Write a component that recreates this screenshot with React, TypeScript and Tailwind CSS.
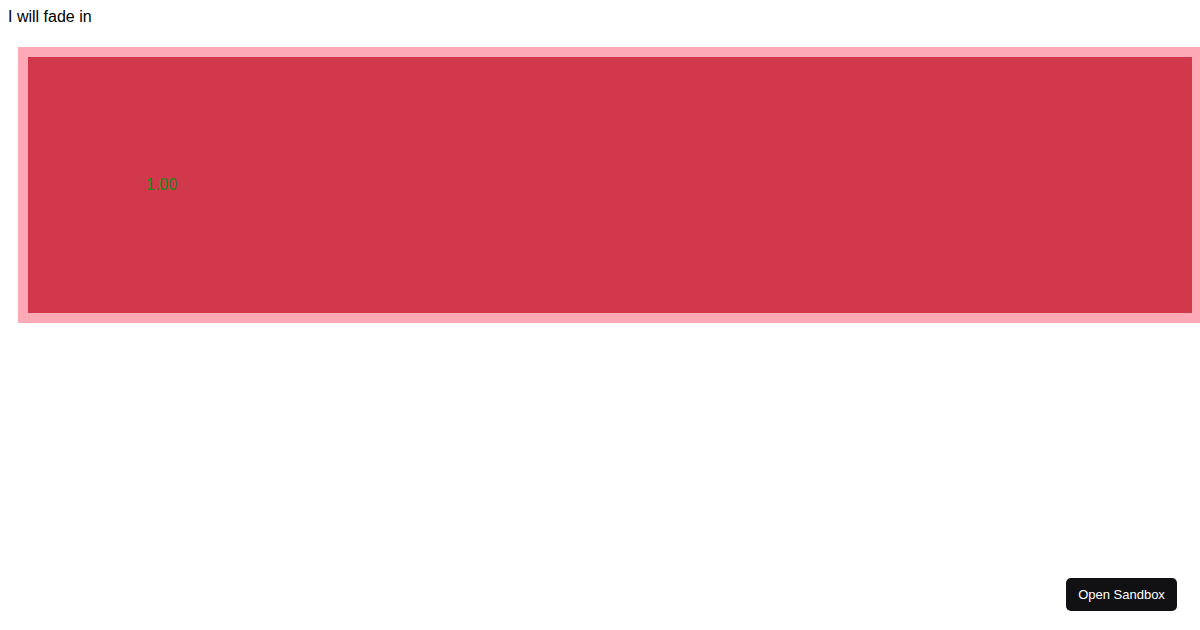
import React from 'react';

const App = () => {
  return (
    <div className="relative h-[630px] w-full overflow-hidden bg-white font-['Liberation_Sans',Arial,sans-serif] text-black">
      <div className="pl-2 pt-2 text-base leading-[18px]">I will fade in</div>
      <div className="ml-[18px] mt-[21px] w-[1182px] border-[10px] border-r-[8px] border-[#fea9b6] bg-[#d2384b]">
        <div className="flex h-[256px] items-center pl-[118px]">
          <span className="text-base leading-[18px] text-[#248a1e]">1.00</span>
        </div>
      </div>
      <button className="absolute bottom-[19px] right-[23px] h-[33px] w-[111px] rounded-[5px] bg-[#111113] text-[13px] text-white">
        Open Sandbox
      </button>
    </div>
  );
};

export default App;
